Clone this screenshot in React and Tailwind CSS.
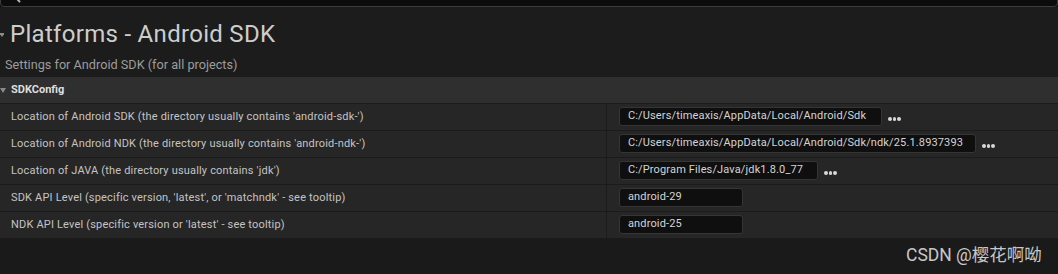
import React from "react";

const rows = [
  { label: "Location of Android SDK (the directory usually contains 'android-sdk-')", value: "C:/Users/timeaxis/AppData/Local/Android/Sdk", w: "w-[263px]", dots: true },
  { label: "Location of Android NDK (the directory usually contains 'android-ndk-')", value: "C:/Users/timeaxis/AppData/Local/Android/Sdk/ndk/25.1.8937393", w: "w-[357px]", dots: true },
  { label: "Location of JAVA (the directory usually contains 'jdk')", value: "C:/Program Files/Java/jdk1.8.0_77", w: "w-[199px]", dots: true },
  { label: "SDK API Level (specific version, 'latest', or 'matchndk' - see tooltip)", value: "android-29", w: "w-[124px]", dots: false },
  { label: "NDK API Level (specific version or 'latest' - see tooltip)", value: "android-25", w: "w-[124px]", dots: false },
];

function Dots() {
  return (
    <div className="flex gap-[1px] ml-[6px] mt-[10px]">
      <span className="w-[3.5px] h-[3.5px] rounded-full bg-[#d8d8d8]" />
      <span className="w-[3.5px] h-[3.5px] rounded-full bg-[#d8d8d8]" />
      <span className="w-[3.5px] h-[3.5px] rounded-full bg-[#d8d8d8]" />
    </div>
  );
}

export default function App() {
  return (
    <div className="w-[1058px] h-[274px] bg-[#1a1a1a] overflow-hidden relative font-['Roboto',_'Noto_Sans_CJK_SC',_sans-serif]">
      {/* search bar, mostly scrolled off */}
      <div className="h-[7px] bg-[#101010] overflow-hidden">
        <div className="-mt-[18px] h-[25px] border border-[#3c3c3c] rounded-[4px] bg-[#0c0c0c] flex items-center pl-[6px]">
          <svg width="14" height="14" viewBox="0 0 14 14" className="mt-[2px]">
            <circle cx="5.5" cy="5.5" r="4" fill="none" stroke="#bdbdbd" strokeWidth="1.6" />
            <path d="M8.5 8.5 L12.5 12.5" stroke="#bdbdbd" strokeWidth="1.8" strokeLinecap="round" />
          </svg>
        </div>
      </div>
      {/* title area */}
      <div className="h-[70px] bg-[#1c1c1c] flex flex-col">
        <div className="flex items-center h-[42px] pt-[12px]">
          <svg width="4" height="6" viewBox="0 0 4 6" className="mt-[2px]">
            <path d="M0 0 L4 3 L0 6 Z" fill="#8a8a8a" transform="rotate(90 2 3)" />
          </svg>
          <span className="ml-[6px] text-[24px] leading-none text-[#cdcdcd] tracking-[0.3px]">Platforms - Android SDK</span>
        </div>
        <div className="pl-[5px] mt-[10px] text-[12.7px] leading-none text-[#9c9c9c]">Settings for Android SDK (for all projects)</div>
      </div>
      {/* category header */}
      <div className="h-[26px] bg-[#2f2f2f] flex items-center">
        <svg width="6" height="5" viewBox="0 0 6 5">
          <path d="M0 0 L6 0 L3 5 Z" fill="#8a8a8a" />
        </svg>
        <span className="ml-[5px] text-[11px] font-bold text-[#dedede]">SDKConfig</span>
      </div>
      {/* rows */}
      <div className="flex flex-col">
        {rows.map((r) => (
          <div key={r.label} className="h-[27px] border-t border-[#1b1b1b] bg-[#262626] flex">
            <div className="w-[607px] border-r border-[#1b1b1b] flex items-center pl-[11px] text-[11px] tracking-[0.18px] text-[#c4c4c4]">
              {r.label}
            </div>
            <div className="flex-1 flex items-start pl-[12px] pt-[3px]">
              <div className={`${r.w} h-[19px] bg-[#0f0f0f] border border-[#353535] rounded-[3px] flex items-center pl-[8px] text-[11px] tracking-[0.14px] text-[#d4d4d4] whitespace-nowrap`}>
                {r.value}
              </div>
              {r.dots && <Dots />}
            </div>
          </div>
        ))}
        <div className="border-t border-[#1b1b1b]" />
      </div>
      {/* watermark */}
      <div className="absolute left-[906px] top-[244px] text-[17.5px] leading-[22px] text-[#c8c8c8] whitespace-nowrap">
        CSDN @樱花啊呦
      </div>
    </div>
  );
}
